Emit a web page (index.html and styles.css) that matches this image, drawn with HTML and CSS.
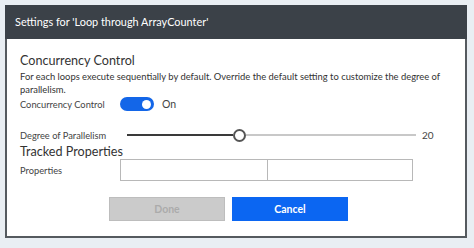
FILE: index.html
```html
<html>
    <head>
        <meta charset="utf-8">
        <link rel="stylesheet" href="styles.css">
    </head>
    <body>
        <div class='dialog'>
            <div class='title'>Settings for 'Loop through ArrayCounter'</div>
            <div class='content'>
                <div class='heading first'>Concurrency Control</div>
                <div class='desc'>For each loops execute sequentially by default. Override the default setting to customize the degree of parallelism.</div>
                <div class='row toggle-row'>
                    <div class='label'>Concurrency Control</div>
                    <div class='toggle'><div class='knob'></div></div>
                    <div class='toggle-text'>On</div>
                </div>
                <div class='row slider-row'>
                    <div class='label'>Degree of Parallelism</div>
                    <div class='slider'>
                        <div class='track-on'></div>
                        <div class='thumb'></div>
                        <div class='track-off'></div>
                    </div>
                    <div class='slider-value'>20</div>
                </div>
                <div class='heading second'>Tracked Properties</div>
                <div class='row props-row'>
                    <div class='label'>Properties</div>
                    <div class='inputs'>
                        <div class='input key'></div>
                        <div class='input val'></div>
                    </div>
                </div>
                <div class='buttons'>
                    <button class='btn done'>Done</button>
                    <button class='btn cancel'>Cancel</button>
                </div>
            </div>
        </div>
    </body>
</html>
```

FILE: styles.css
```css
body {
    margin: 0;
    background: #e9eef3;
    font-family: Lato, "Open Sans", sans-serif;
    color: #333;
}
.dialog {
    margin: 5px 0 0 5px;
    width: 462px;
    height: 233px;
    box-sizing: border-box;
    background: white;
    border: 2px solid #555a5f;
    border-top: none;
    display: flex;
    flex-direction: column;
}
.title {
    height: 34px;
    background: #3b4148;
    color: white;
    font-size: 10.9px;
    line-height: 34px;
    margin: 0 -2px;
    padding-left: 10px;
}
.content {
    padding: 0 0 0 13px;
    flex: 1;
}
.heading {
    font-size: 12.6px;
    line-height: 18px;
    color: #333;
    white-space: nowrap;
}
.heading.first {
    margin-top: 13px;
}
.heading.second {
    line-height: 14px;
    margin-top: 2px;
}
.desc {
    font-size: 9.4px;
    line-height: 13px;
    width: 440px;
    color: #333;
}
.row {
    display: flex;
    align-items: center;
}
.label {
    width: 100px;
    font-size: 9.3px;
    color: #444;
    white-space: nowrap;
}
.toggle-row {
    height: 16px;
}
.toggle {
    width: 34px;
    height: 14px;
    border-radius: 8px;
    background: #1366e8;
    display: flex;
    justify-content: flex-end;
    align-items: center;
    padding: 0 3px;
    box-sizing: border-box;
}
.knob {
    width: 9px;
    height: 9px;
    border-radius: 50%;
    background: white;
}
.toggle-text {
    margin-left: 8px;
    font-size: 10.5px;
    color: #444;
}
.slider-row {
    height: 16px;
    margin-top: 15px;
}
.slider {
    margin-left: 7px;
    width: 289px;
    display: flex;
    align-items: center;
}
.track-on {
    width: 106px;
    height: 2px;
    background: #3a3a3a;
}
.thumb {
    width: 9px;
    height: 9px;
    border: 2px solid #555;
    border-radius: 50%;
    background: white;
}
.track-off {
    flex: 1;
    height: 2px;
    background: #c8c8c8;
}
.slider-value {
    margin-left: 6px;
    font-size: 10px;
    color: #444;
}
.props-row {
    height: 22px;
}
.inputs {
    display: flex;
    height: 22px;
    width: 293px;
    border: 1px solid #b8b8b8;
    box-sizing: border-box;
}
.input.key {
    width: 146px;
    border-right: 1px solid #b8b8b8;
}
.input.val {
    flex: 1;
}
.buttons {
    display: flex;
    gap: 7px;
    margin: 16px 0 0 89px;
}
.btn {
    width: 116px;
    height: 24px;
    border: none;
    font-family: Lato, "Open Sans", sans-serif;
    font-size: 10.5px;
    font-weight: bold;
    padding: 0;
}
.done {
    background: #cbcbcb;
    color: #ababab;
    border: 1px solid #bdbdbd;
}
.cancel {
    background: #0b66f2;
    color: white;
}
```
